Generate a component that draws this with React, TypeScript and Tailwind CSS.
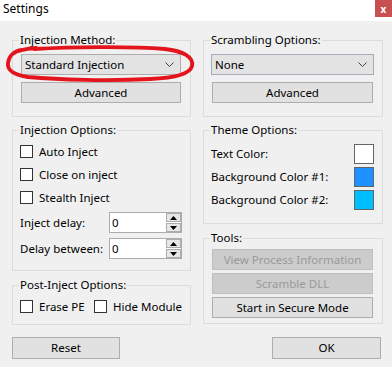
import React from "react";

const font = { fontFamily: '"Noto Sans", "Open Sans", sans-serif' };

function Group({ label, className, children }: { label: string; className: string; children?: React.ReactNode }) {
  return (
    <div className={"relative border border-[#dcdcdc] " + className}>
      <span className="absolute left-[6px] top-[-10px] bg-[#f0f0f0] px-[1px] text-[11.5px] leading-[18px] text-black">
        {label}
      </span>
      {children}
    </div>
  );
}

function Chevron() {
  return (
    <svg width="9" height="6" viewBox="0 0 9 6" className="shrink-0">
      <polyline points="0.5,0.5 4.5,4.5 8.5,0.5" fill="none" stroke="#404040" strokeWidth="1" />
    </svg>
  );
}

function Dropdown({ text, w, border }: { text: string; w: string; border: string }) {
  return (
    <div className={"flex h-[21px] items-center justify-between bg-[#e3e3e3] border pl-[3px] pr-[6px] text-[11.5px] text-black " + w + " " + border}>
      <span>{text}</span>
      <Chevron />
    </div>
  );
}

function Btn({ text, w, disabled }: { text: string; w: string; disabled?: boolean }) {
  return (
    <div
      className={
        "flex h-[21px] items-center justify-center whitespace-nowrap border text-[11.5px] " +
        w +
        (disabled ? " bg-[#cccccc] border-[#bfbfbf] text-[#9a9a9a]" : " bg-[#e1e1e1] border-[#adadad] text-black")
      }
    >
      {text}
    </div>
  );
}

function Check({ label }: { label: string }) {
  return (
    <div className="flex h-[13px] items-center">
      <div className="h-[13px] w-[13px] shrink-0 border border-[#333333] bg-white" />
      <span className="ml-[6px] whitespace-nowrap text-[11.5px] leading-[13px] text-black">{label}</span>
    </div>
  );
}

function Spinner() {
  return (
    <div className="flex h-[21px] w-[73px] border border-[#acacac] bg-white">
      <div className="flex-1 pl-[2px] text-[11.5px] leading-[19px] text-black">0</div>
      <div className="flex w-[15px] flex-col gap-[1px]">
        <div className="flex flex-1 items-center justify-center border border-[#adadad] bg-[#e6e6e6]">
          <svg width="7" height="4" viewBox="0 0 7 4">
            <polygon points="0,4 7,4 3.5,0" fill="#000" />
          </svg>
        </div>
        <div className="flex flex-1 items-center justify-center border border-[#adadad] bg-[#e6e6e6]">
          <svg width="7" height="4" viewBox="0 0 7 4">
            <polygon points="0,0 7,0 3.5,4" fill="#000" />
          </svg>
        </div>
      </div>
    </div>
  );
}

function Swatch({ color }: { color: string }) {
  return <div className={"h-[20px] w-[20px] border border-[#646464] " + color} />;
}

export default function App() {
  return (
    <div className="relative flex h-[367px] w-[392px] flex-col overflow-hidden bg-[#f0f0f0]" style={font}>
      {/* title bar */}
      <div className="flex h-[21px] shrink-0 items-start justify-between bg-white">
        <span className="pl-[3px] pt-[1px] text-[12px] leading-[16px] text-black">Settings</span>
        <div className="flex h-[17px] w-[17px] items-center justify-center bg-[#c75050] text-[10px] font-bold leading-none text-white">
          x
        </div>
      </div>

      {/* columns */}
      <div className="mt-[19px] flex gap-[12px] pl-[12px]">
        {/* left column */}
        <div className="flex w-[179px] flex-col">
          <Group label="Injection Method:" className="h-[77px] pl-[8px] pt-[13px]">
            <Dropdown text="Standard Injection" w="w-[160px]" border="border-[#adadad]" />
            <div className="mt-[7px]">
              <Btn text="Advanced" w="w-[160px]" />
            </div>
          </Group>

          <Group label="Injection Options:" className="mt-[13px] h-[141px] pl-[7px] pt-[14px]">
            <div className="flex flex-col gap-[10px]">
              <Check label="Auto Inject" />
              <Check label="Close on inject" />
              <Check label="Stealth Inject" />
            </div>
            <div className="mt-[8px] flex flex-col gap-[5px]">
              <div className="flex items-center">
                <span className="w-[89px] text-[11.5px] text-black">Inject delay:</span>
                <Spinner />
              </div>
              <div className="flex items-center">
                <span className="w-[89px] text-[11.5px] text-black">Delay between:</span>
                <Spinner />
              </div>
            </div>
          </Group>

          <Group label="Post-Inject Options:" className="mt-[14px] h-[40px] pl-[7px] pt-[14px]">
            <div className="flex">
              <div className="w-[74px]">
                <Check label="Erase PE" />
              </div>
              <Check label="Hide Module" />
            </div>
          </Group>
        </div>

        {/* right column */}
        <div className="flex w-[180px] flex-col">
          <Group label="Scrambling Options:" className="h-[77px] pl-[7px] pt-[13px]">
            <Dropdown text="None" w="w-[163px]" border="border-[#a4adb7]" />
            <div className="mt-[7px] pl-[1px]">
              <Btn text="Advanced" w="w-[161px]" />
            </div>
          </Group>

          <Group label="Theme Options:" className="mt-[13px] h-[94px] pl-[7px] pr-[8px] pt-[13px]">
            <div className="flex flex-col gap-[3px]">
              <div className="flex items-center justify-between">
                <span className="text-[11.5px] text-black">Text Color:</span>
                <Swatch color="bg-white" />
              </div>
              <div className="flex items-center justify-between">
                <span className="text-[11.5px] text-black">Background Color #1:</span>
                <Swatch color="bg-[#1e90ff]" />
              </div>
              <div className="flex items-center justify-between">
                <span className="text-[11.5px] text-black">Background Color #2:</span>
                <Swatch color="bg-[#00bfff]" />
              </div>
            </div>
          </Group>

          <Group label="Tools:" className="mt-[14px] h-[86px] pl-[8px] pt-[10px]">
            <div className="flex flex-col gap-[3px]">
              <Btn text="View Process Information" w="w-[161px]" disabled />
              <Btn text="Scramble DLL" w="w-[161px]" disabled />
              <Btn text="Start in Secure Mode" w="w-[161px]" />
            </div>
          </Group>
        </div>
      </div>

      {/* bottom buttons */}
      <div className="mt-[12px] flex justify-between pl-[12px] pr-[11px]">
        <div className="h-[22px]">
          <Btn text="Reset" w="w-[108px] h-[22px]" />
        </div>
        <div className="h-[22px]">
          <Btn text="OK" w="w-[109px] h-[22px]" />
        </div>
      </div>

      {/* red annotation ellipse */}
      <svg className="pointer-events-none absolute left-0 top-0" width="392" height="367" viewBox="0 0 392 367">
        <path
          d="M 34 49 C 70 47 130 46 165 49 C 183 51 194 57 192 66 C 190 74 176 78 150 79 C 110 81 60 80 28 77 C 14 75 7 70 8 63 C 9 56 14 51 22 50 C 27 49 31 48 36 48"
          fill="none"
          stroke="#e3141b"
          strokeWidth="3.8"
          strokeLinecap="round"
          strokeLinejoin="round"
        />
      </svg>
    </div>
  );
}
